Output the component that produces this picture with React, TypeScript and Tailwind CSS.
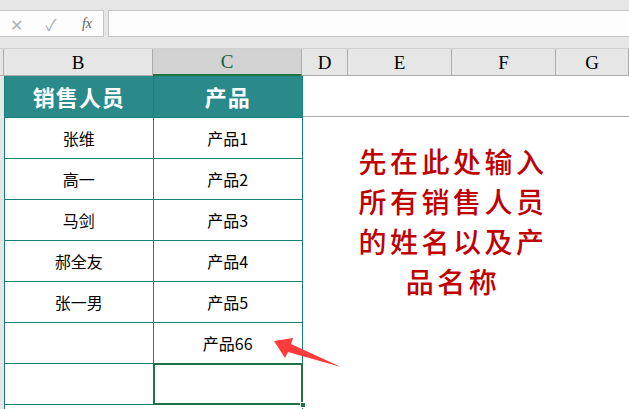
import React from 'react'

// Excel-like sheet: sales staff / product list with a red note

const cjk = '"Noto Sans CJK SC", "Noto Sans", sans-serif'

const people = ['张维', '高一', '马剑', '郝全友', '张一男', '', '']
const products = ['产品1', '产品2', '产品3', '产品4', '产品5', '产品66', '']

const ColHead: React.FC<{ label: string; w: string; active?: boolean }> = ({ label, w, active }) => (
  <div
    className={`${w} h-full flex items-center justify-center border-r border-[#ababab] text-[19px] leading-none ${
      active ? 'bg-[#d2d2d2] text-[#1e5a3c] border-b-2 border-b-[#217346]' : 'text-black border-b border-b-[#ababab]'
    }`}
    style={{ fontFamily: '"Liberation Serif", "DejaVu Serif", serif' }}
  >
    {label}
  </div>
)

export default function App() {
  return (
    <div className="w-[629px] h-[409px] overflow-hidden bg-white relative" style={{ fontFamily: cjk }}>
      {/* formula bar */}
      <div className="h-[48px] bg-[#e6e6e6] pt-[10px] flex gap-[4px]">
        <div className="w-[104px] h-[27px] bg-[#fdfdfd] border border-l-0 border-[#c6c6c6] flex items-center text-[#b0b0b0]">
          <span className="w-[30px] text-center text-[16px] ml-[1px]">✕</span>
          <span className="w-[40px] text-center text-[16px]">✓</span>
          <span
            className="flex-1 text-center text-[14px] italic text-[#606060]"
            style={{ fontFamily: '"Liberation Serif", serif' }}
          >
            fx
          </span>
        </div>
        <div className="flex-1 h-[27px] bg-[#fdfdfd] border border-r-0 border-[#c6c6c6]" />
      </div>

      {/* column headers */}
      <div className="h-[28px] flex bg-[#e6e6e6] border-t border-[#d0d0d0]">
        <div className="w-[4px] h-full border-r border-[#ababab] border-b border-b-[#ababab]" />
        <ColHead label="B" w="w-[149px]" />
        <ColHead label="C" w="w-[149px]" active />
        <ColHead label="D" w="w-[46px]" />
        <ColHead label="E" w="w-[104px]" />
        <ColHead label="F" w="w-[104px]" />
        <ColHead label="G" w="flex-1" />
      </div>

      {/* body */}
      <div className="flex">
        <div className="w-[4px] h-[333px] bg-[#e6e6e6]" />

        {/* table B:C */}
        <div className="w-[299px] border-l border-r border-[#178079]">
          <div className="h-[41px] grid grid-cols-2 bg-[#2a8a8a] text-white text-[22px] font-bold">
            <div className="flex items-center justify-center border-r border-[#178079] tracking-[1px]">销售人员</div>
            <div className="flex items-center justify-center tracking-[1px]">产品</div>
          </div>
          {people.map((p, i) => (
            <div key={i} className="h-[41px] grid grid-cols-2 border-t border-[#178079] text-[16px] text-black">
              <div className="flex items-center justify-center border-r border-[#178079]">{p}</div>
              <div className="relative flex items-center justify-center">
                {products[i]}
                {i === 6 && (
                  <>
                    <div className="absolute inset-[-1px] border-2 border-[#217346]" />
                    <div className="absolute right-[-4px] bottom-[-4px] w-[6px] h-[6px] bg-[#217346] border border-white" />
                  </>
                )}
              </div>
            </div>
          ))}
          <div className="h-[6px] border-t border-[#178079]" />
        </div>

        {/* D:G area */}
        <div className="flex-1">
          <div className="h-[41px] border-b border-[#a6a6a6]" />
          <div className="ml-[52px] w-[196px] mt-[24px] flex flex-col items-center text-[28px] leading-[40px] tracking-[3.5px] text-[#c00000] font-medium">
            <div>先在此处输入</div>
            <div>所有销售人员</div>
            <div>的姓名以及产</div>
            <div>品名称</div>
          </div>
        </div>
      </div>

      {/* arrow pointing at 产品66 */}
      <svg className="absolute left-0 top-0 pointer-events-none" width="629" height="409" viewBox="0 0 629 409">
        <polygon points="274,341 293,338 291,344 341,367 288,352 285,358" fill="#ff3b3b" />
      </svg>
    </div>
  )
}
